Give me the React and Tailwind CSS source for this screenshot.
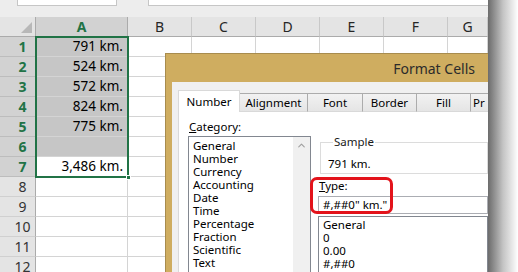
import { ChevronUp } from 'lucide-react';

const COLS = [
  { key: 'A', w: 'w-[92px]' },
  { key: 'B', w: 'w-[64px]' },
  { key: 'C', w: 'w-[64px]' },
  { key: 'D', w: 'w-[64px]' },
  { key: 'E', w: 'w-[64px]' },
  { key: 'F', w: 'w-[64px]' },
  { key: 'G', w: 'flex-1' },
];

const VALUES = ['791 km.', '524 km.', '572 km.', '824 km.', '775 km.', '', '3,486 km.', '', '', '', '', ''];

const CATEGORIES = ['General', 'Number', 'Currency', 'Accounting', 'Date', 'Time', 'Percentage', 'Fraction', 'Scientific', 'Text', 'Special'];
const TYPES = ['General', '0', '0.00', '#,##0', '#,##0.00'];

const TABS = [
  { label: 'Alignment', w: 'w-[68px]' },
  { label: 'Font', w: 'w-[55px]' },
  { label: 'Border', w: 'w-[54px]' },
  { label: 'Fill', w: 'w-[54px]' },
];

function Sheet() {
  return (
    <div className="flex flex-col">
      {/* name box + formula bar strip */}
      <div className="flex h-[17px] bg-[#ededed]">
        <div className="ml-[17px] h-[6px] w-[100px] border-x border-b border-[#c6c6c6] bg-white" />
        <div className="ml-[31px] h-[6px] flex-1 border-l border-b border-[#c6c6c6] bg-white" />
      </div>

      {/* column headers */}
      <div className="flex h-[20px] text-[14px]">
        <div className="flex w-[36px] items-end justify-end border-r border-b border-[#ababab] bg-[#e4e4e4] pb-[3px] pr-[3px]">
          <svg width="11" height="11" viewBox="0 0 11 11">
            <polygon points="11,0 11,11 0,11" fill="#b8b8b8" />
          </svg>
        </div>
        {COLS.map((c) => (
          <div
            key={c.key}
            className={`${c.w} flex items-center justify-center border-r border-b ${
              c.key === 'A'
                ? 'border-[#ababab] bg-[#d2d2d2] font-bold text-[#217346]'
                : 'border-[#c8c8c8] border-b-[#ababab] bg-[#e4e4e4] text-[#262626]'
            }`}
          >
            {c.key}
          </div>
        ))}
      </div>

      {/* rows */}
      {VALUES.map((v, i) => {
        const sel = i < 7;
        return (
          <div key={i} className="flex h-[20px] text-[13.5px]">
            <div
              className={`flex w-[36px] items-center justify-center border-r border-b pl-[10px] text-[14px] ${
                sel
                  ? 'border-[#ababab] border-b-[#bdbdbd] bg-[#d2d2d2] font-bold text-[#217346]'
                  : 'border-[#ababab] border-b-[#d0d0d0] bg-[#e4e4e4] text-[#333]'
              }`}
            >
              {i + 1}
            </div>
            {COLS.map((c) => (
              <div
                key={c.key}
                className={`${c.w} flex items-center justify-end border-r border-b border-[#d4d4d4] pr-[4px] text-black ${
                  c.key === 'A' && i < 6 ? 'bg-[#c6c6c6]' : 'bg-white'
                }`}
              >
                {c.key === 'A' ? v : ''}
              </div>
            ))}
          </div>
        );
      })}
    </div>
  );
}

function Dialog() {
  return (
    <div className="absolute left-[165px] top-[53px] right-0 h-[230px] border-l border-t border-[#a88c4e] bg-[#cfad60] font-['Noto_Sans',sans-serif]">
      <div className="flex h-[28px] items-center justify-end pr-[13px] text-[14px] text-[#2b2b2b]">
        Format Cells
      </div>
      <div className="ml-[6px] h-full bg-[#f0f0f0] pl-[6px] pt-[8px] text-[11.5px] text-black">
        {/* tabs */}
        <div className="flex items-end">
          <div className="flex h-[22px] w-[62px] shrink-0 items-center justify-center border-x border-t border-[#d9d9d9] bg-white">
            Number
          </div>
          {TABS.map((t) => (
            <div
              key={t.label}
              className={`${t.w} flex h-[19px] shrink-0 items-center justify-center border-r border-t border-b border-[#acacac] border-b-[#d9d9d9] bg-gradient-to-b from-[#f2f2f2] to-[#e5e5e5]`}
            >
              {t.label}
            </div>
          ))}
          <div className="flex h-[19px] flex-1 items-center overflow-hidden whitespace-nowrap border-t border-b border-[#acacac] border-b-[#d9d9d9] bg-gradient-to-b from-[#f2f2f2] to-[#e5e5e5] pl-[2px]">
            Pr
          </div>
        </div>

        {/* panel */}
        <div className="flex h-full border-l border-[#d9d9d9] bg-white">
          <div className="w-[132px] shrink-0 pt-[7px]">
            <div className="pl-[10px] leading-[16px]">
              <span className="underline">C</span>ategory:
            </div>
            <div className="ml-[9px] mt-[1px] flex h-[200px] w-[123px] border border-[#828790]">
              <div className="flex-1 pl-[4px] pt-[2px] leading-[13px]">
                {CATEGORIES.map((c) => (
                  <div key={c}>{c}</div>
                ))}
              </div>
              <div className="w-[17px] bg-[#f0f0f0] pt-[3px]">
                <ChevronUp className="mx-auto h-[11px] w-[11px] text-[#a0a0a0]" strokeWidth={2.5} />
              </div>
            </div>
          </div>

          <div className="flex-1 pl-[7px] pt-[22px]">
            <fieldset className="ml-[2px] border border-[#dcdcdc] pb-[1px] pl-[7px]">
              <legend className="ml-[5px] px-[1px] leading-[16px] text-[#1a1a1a]">Sample</legend>
              <div className="pt-[6px] leading-[16px]">791 km.</div>
            </fieldset>
            <div className="mt-[4px] pl-[1px] leading-[16px]">
              <span className="underline">T</span>ype:
            </div>
            <div className="mt-[2px] flex h-[18px] items-center border border-[#abadb3] pl-[4px]">
              #,##0" km."
            </div>
            <div className="mt-[2px] h-[80px] border border-[#828790] pl-[4px] pt-[1px] leading-[13px]">
              {TYPES.map((t) => (
                <div key={t}>{t}</div>
              ))}
            </div>
          </div>
        </div>
      </div>
    </div>
  );
}

export default function App() {
  return (
    <div className="flex h-[272px] w-[518px] overflow-hidden bg-white font-['Noto_Sans',sans-serif]">
      <div className="relative h-full w-[488px] shrink-0 overflow-hidden bg-[#ededed]">
        <Sheet />

        {/* selection outline A1:A7 */}
        <div className="absolute left-[35px] top-[36px] h-[142px] w-[94px] border-2 border-[#217346]" />
        <div className="absolute left-[126px] top-[175px] h-[5px] w-[5px] border border-white bg-[#217346]" />

        <Dialog />

        {/* red highlight around Type */}
        <div className="absolute left-[310px] top-[177px] h-[37px] w-[83px] rounded-[7px] border-[3px] border-[#e3131b]" />
      </div>
      <div className="h-full flex-1 bg-gradient-to-r from-[#6c6c6c] via-[#c4c4c4] to-white" />
    </div>
  );
}
